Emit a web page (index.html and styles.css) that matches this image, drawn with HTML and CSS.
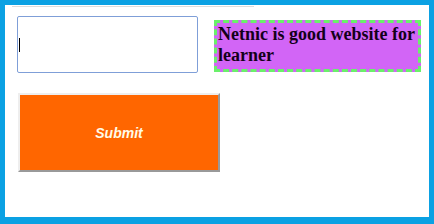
FILE: index.html
```html
<!DOCTYPE html>
<html lang="en">
  <head>
    <meta charset="UTF-8" />
    <title>Netnic form</title>
    <link rel="stylesheet" href="styles.css">
  </head>
  <body>
    <div class="frame">
      <div class="rule"></div>
      <div class="row">
        <div class="field">
          <input type="text" class="text-input" />
        </div>
        <div class="note">Netnic is good website for learner</div>
      </div>
      <button class="submit-btn">Submit</button>
    </div>
  </body>
</html>
```

FILE: styles.css
```css
html, body {
  margin: 0;
  height: 100%;
  background: #fff;
}

.frame {
  box-sizing: border-box;
  height: 224px;
  width: 434px;
  border: 5px solid #0ba1e3;
  border-bottom-width: 7px;
}

.rule {
  width: 242px;
  height: 1px;
  margin: 1px 0 0 7px;
  background: #dcdcdc;
}

.row {
  display: flex;
  align-items: flex-start;
  gap: 16px;
  margin: 9px 0 0 12px;
}

.field {
  position: relative;
}

/* fake caret, the input is not focused in the shot */
.field::after {
  content: "";
  position: absolute;
  left: 2px;
  top: 22px;
  width: 1px;
  height: 14px;
  background: #000;
}

.text-input {
  box-sizing: border-box;
  width: 181px;
  height: 57px;
  margin: 0;
  padding: 0 4px;
  border: 1px solid #7f9fd8;
  border-radius: 2px;
  outline: none;
  background: #fff;
}

.note {
  box-sizing: border-box;
  width: 207px;
  height: 52px;
  margin-top: 4px;
  padding: 1px 0 0 1px;
  border: 3px dashed #6af06a;
  background: #d265f6;
  color: #14001a;
  font-family: "Liberation Serif", serif;
  font-weight: bold;
  font-size: 18px;
  line-height: 21px;
}

.submit-btn {
  display: block;
  box-sizing: border-box;
  width: 202px;
  height: 79px;
  margin: 20px 0 0 13px;
  padding: 0;
  border: 2px solid;
  border-color: #eeeeee #999999 #999999 #eeeeee;
  background: #ff6600;
  color: #fffbe8;
  font-family: "Liberation Sans", Arial, sans-serif;
  font-weight: bold;
  font-style: italic;
  font-size: 14px;
}
```
